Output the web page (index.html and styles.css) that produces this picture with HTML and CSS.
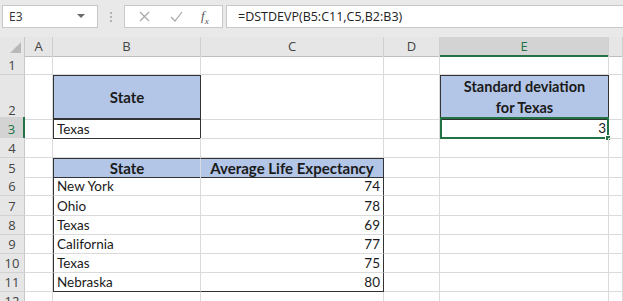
FILE: index.html
```html
<!DOCTYPE html>
<html lang="en">
  <head>
    <meta charset="UTF-8" />
    <title>DSTDEVP</title>
    <link rel="stylesheet" href="styles.css">
  </head>
  <body>
    <!-- Formula bar -->
    <div class="toolbar">
      <div class="namebox">
        <span>E3</span>
        <svg class="drop" width="8" height="5" viewBox="0 0 8 5"><path d="M0 0h8L4 4z" fill="#6a6a6a"/></svg>
      </div>
      <div class="dots"><i></i><i></i><i></i></div>
      <div class="actions">
        <svg width="11" height="11" viewBox="0 0 11 11"><path d="M1 1l9 9M10 1l-9 9" stroke="#a8a8a8" stroke-width="1.2"/></svg>
        <svg width="13" height="11" viewBox="0 0 13 11"><path d="M1 6l4 4 7-9" stroke="#a8a8a8" stroke-width="1.2" fill="none"/></svg>
        <span class="fx">f<sub>x</sub></span>
      </div>
      <div class="formula">=DSTDEVP(B5:C11,C5,B2:B3)</div>
    </div>

    <!-- Grid -->
    <div class="sheet">
      <div class="row head">
        <div class="corner"><svg width="11" height="11" viewBox="0 0 11 11"><path d="M11 0v11H0z" fill="#b9b9b9"/></svg></div>
        <div class="col">A</div>
        <div class="col">B</div>
        <div class="col">C</div>
        <div class="col">D</div>
        <div class="col sel">E</div>
        <div class="col"></div>
      </div>

      <div class="row r1">
        <div class="num">1</div><div class="c"></div><div class="c"></div><div class="c"></div><div class="c"></div><div class="c"></div><div class="c"></div>
      </div>

      <div class="row r2">
        <div class="num">2</div>
        <div class="c"></div>
        <div class="c th box-top">State</div>
        <div class="c"></div>
        <div class="c"></div>
        <div class="c th box-top wrap">Standard deviation<br>for Texas</div>
        <div class="c"></div>
      </div>

      <div class="row r3">
        <div class="num active">3</div>
        <div class="c"></div>
        <div class="c box-bottom">Texas</div>
        <div class="c"></div>
        <div class="c"></div>
        <div class="c active-cell right">3<span class="handle"></span></div>
        <div class="c"></div>
      </div>

      <div class="row r4">
        <div class="num">4</div><div class="c"></div><div class="c"></div><div class="c"></div><div class="c"></div><div class="c"></div><div class="c"></div>
      </div>

      <div class="row r5">
        <div class="num">5</div>
        <div class="c"></div>
        <div class="c th t-top t-left">State</div>
        <div class="c th t-top t-right">Average Life Expectancy</div>
        <div class="c"></div><div class="c"></div><div class="c"></div>
      </div>

      <div class="row r6">
        <div class="num">6</div><div class="c"></div>
        <div class="c t-left">New York</div><div class="c t-right right">74</div>
        <div class="c"></div><div class="c"></div><div class="c"></div>
      </div>
      <div class="row r7">
        <div class="num">7</div><div class="c"></div>
        <div class="c t-left">Ohio</div><div class="c t-right right">78</div>
        <div class="c"></div><div class="c"></div><div class="c"></div>
      </div>
      <div class="row r8">
        <div class="num">8</div><div class="c"></div>
        <div class="c t-left">Texas</div><div class="c t-right right">69</div>
        <div class="c"></div><div class="c"></div><div class="c"></div>
      </div>
      <div class="row r9">
        <div class="num">9</div><div class="c"></div>
        <div class="c t-left">California</div><div class="c t-right right">77</div>
        <div class="c"></div><div class="c"></div><div class="c"></div>
      </div>
      <div class="row r10">
        <div class="num">10</div><div class="c"></div>
        <div class="c t-left">Texas</div><div class="c t-right right">75</div>
        <div class="c"></div><div class="c"></div><div class="c"></div>
      </div>
      <div class="row r11">
        <div class="num">11</div><div class="c"></div>
        <div class="c t-left t-bottom">Nebraska</div><div class="c t-right t-bottom right">80</div>
        <div class="c"></div><div class="c"></div><div class="c"></div>
      </div>
      <div class="row r12">
        <div class="num">12</div><div class="c"></div><div class="c"></div><div class="c"></div><div class="c"></div><div class="c"></div><div class="c"></div>
      </div>
    </div>
  </body>
</html>
```

FILE: styles.css
```css
* {
  box-sizing: border-box;
  margin: 0;
  padding: 0;
}

body {
  background-color: white;
  font-family: Lato, "Liberation Sans", sans-serif;
  width: 623px;
  height: 301px;
  overflow: hidden;
}

/* formula bar */
.toolbar {
  height: 37px;
  background-color: #e9e9e9;
  display: flex;
  align-items: flex-start;
  padding-top: 5px;
  padding-left: 2px;
  font-family: "Open Sans", "Noto Sans", sans-serif;
  font-size: 12px;
  color: #333;
}

.namebox {
  width: 96px;
  height: 23px;
  background: white;
  border: 1px solid #c8c8c8;
  display: flex;
  align-items: center;
  justify-content: space-between;
  padding: 0 12px 0 6px;
}

.dots {
  width: 26px;
  height: 23px;
  display: flex;
  flex-direction: column;
  align-items: center;
  justify-content: center;
  gap: 2px;
}

.dots i {
  width: 2px;
  height: 2px;
  background: #b4b4b4;
}

.actions {
  width: 99px;
  height: 23px;
  background: white;
  border: 1px solid #c8c8c8;
  display: flex;
  align-items: center;
  gap: 20px;
  padding-left: 14px;
}

.fx {
  font-family: "Liberation Serif", serif;
  font-style: italic;
  font-size: 13px;
  color: #555;
  margin-left: -2px;
}

.fx sub {
  font-size: 9px;
}

.formula {
  flex: 1;
  height: 23px;
  margin-left: 3px;
  background: white;
  border: 1px solid #c8c8c8;
  border-right: none;
  padding-left: 11px;
  line-height: 21px;
  font-size: 12.5px;
  color: #222;
}

/* grid */
.row {
  display: grid;
  grid-template-columns: 25px 28px 148px 183px 56px 169px 14px;
  height: 19px;
}

.r2 { height: 42px; }
.r3 { height: 21px; }
.r4 { height: 20px; }
.r7 { height: 20px; }
.r12 { height: 10px; }

.head {
  background-color: #e6e6e6;
  font-family: "Open Sans", "Noto Sans", sans-serif;
  font-size: 13px;
  color: #444;
}

.corner {
  border-right: 1px solid #c8c8c8;
  border-bottom: 1px solid #bdbdbd;
  display: flex;
  align-items: flex-end;
  justify-content: flex-end;
  padding: 0 3px 3px 0;
}

.col {
  border-right: 1px solid #cfcfcf;
  border-bottom: 1px solid #bdbdbd;
  text-align: center;
  line-height: 18px;
}

.col.sel {
  background-color: #d3d3d3;
  border-bottom: 2px solid #217346;
  color: #217346;
}

.num {
  background-color: #e6e6e6;
  border-right: 1px solid #c8c8c8;
  border-bottom: 1px solid #d2d2d2;
  font-family: "Open Sans", "Noto Sans", sans-serif;
  font-size: 13px;
  color: #444;
  text-align: center;
  display: flex;
  align-items: flex-end;
  justify-content: center;
  line-height: 18px;
}

.num.active {
  background-color: #d3d3d3;
  border-right: 2px solid #217346;
  color: #217346;
}

.c {
  border-right: 1px solid #dadada;
  border-bottom: 1px solid #dadada;
  font-size: 13.5px;
  color: #1a1a1a;
  padding: 0 3px;
  display: flex;
  align-items: flex-end;
  line-height: 18px;
  white-space: nowrap;
  position: relative;
}

.right {
  justify-content: flex-end;
}

.th {
  background-color: #b4c6e7;
  font-weight: bold;
  font-size: 15px;
  justify-content: center;
  align-items: center;
  text-align: center;
}

.wrap {
  font-size: 14.5px;
  line-height: 21px;
  white-space: normal;
}

/* boxed ranges */
.box-top {
  border: 1px solid #333;
  border-bottom: 2px solid #333;
}

.box-bottom {
  border-left: 1px solid #333;
  border-right: 1px solid #333;
  border-bottom: 1px solid #333;
}

.t-top { border-top: 1px solid #333; border-bottom: 1px solid #333; }
.t-left { border-left: 1px solid #333; }
.t-right { border-right: 1px solid #333; }
.t-bottom { border-bottom: 1px solid #333; }

.active-cell {
  border: 2px solid #217346;
  padding-right: 1px;
}

.handle {
  position: absolute;
  right: -4px;
  bottom: -4px;
  width: 6px;
  height: 6px;
  background: #217346;
  border: 1px solid white;
}
```
